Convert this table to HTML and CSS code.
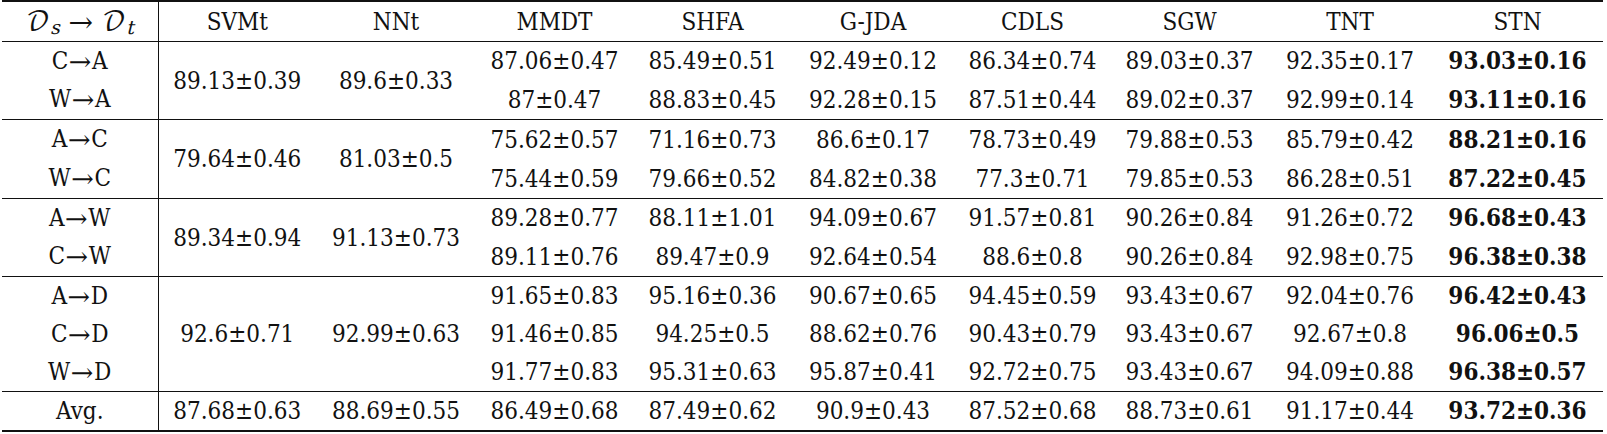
FILE: index.html
```html
<!DOCTYPE html>
<html lang="en">
<head>
    <meta charset="UTF-8">
    <meta name="viewport" content="width=device-width, initial-scale=1.0">
    <title>Domain Adaptation Results</title>
    <link rel="stylesheet" href="styles.css">
</head>
<body>
    <table class="results">
        <colgroup>
            <col class="c-task">
            <col class="c1"><col class="c2"><col class="c3"><col class="c4">
            <col class="c5"><col class="c6"><col class="c7"><col class="c8"><col class="c9">
        </colgroup>
        <thead>
            <tr class="head-row">
                <th class="task"><span class="math">𝒟<sub>s</sub> → 𝒟<sub>t</sub></span></th>
                <th>SVMt</th>
                <th>NNt</th>
                <th>MMDT</th>
                <th>SHFA</th>
                <th>G-JDA</th>
                <th>CDLS</th>
                <th>SGW</th>
                <th>TNT</th>
                <th>STN</th>
            </tr>
        </thead>
        <tbody class="group g2">
            <tr>
                <td class="task">C<span class="arr">→</span>A</td>
                <td rowspan="2">89.13±0.39</td>
                <td rowspan="2">89.6±0.33</td>
                <td>87.06±0.47</td>
                <td>85.49±0.51</td>
                <td>92.49±0.12</td>
                <td>86.34±0.74</td>
                <td>89.03±0.37</td>
                <td>92.35±0.17</td>
                <td class="best">93.03±0.16</td>
            </tr>
            <tr>
                <td class="task">W<span class="arr">→</span>A</td>
                <td>87±0.47</td>
                <td>88.83±0.45</td>
                <td>92.28±0.15</td>
                <td>87.51±0.44</td>
                <td>89.02±0.37</td>
                <td>92.99±0.14</td>
                <td class="best">93.11±0.16</td>
            </tr>
        </tbody>
        <tbody class="group g2 tall">
            <tr>
                <td class="task">A<span class="arr">→</span>C</td>
                <td rowspan="2">79.64±0.46</td>
                <td rowspan="2">81.03±0.5</td>
                <td>75.62±0.57</td>
                <td>71.16±0.73</td>
                <td>86.6±0.17</td>
                <td>78.73±0.49</td>
                <td>79.88±0.53</td>
                <td>85.79±0.42</td>
                <td class="best">88.21±0.16</td>
            </tr>
            <tr>
                <td class="task">W<span class="arr">→</span>C</td>
                <td>75.44±0.59</td>
                <td>79.66±0.52</td>
                <td>84.82±0.38</td>
                <td>77.3±0.71</td>
                <td>79.85±0.53</td>
                <td>86.28±0.51</td>
                <td class="best">87.22±0.45</td>
            </tr>
        </tbody>
        <tbody class="group g2">
            <tr>
                <td class="task">A<span class="arr">→</span>W</td>
                <td rowspan="2">89.34±0.94</td>
                <td rowspan="2">91.13±0.73</td>
                <td>89.28±0.77</td>
                <td>88.11±1.01</td>
                <td>94.09±0.67</td>
                <td>91.57±0.81</td>
                <td>90.26±0.84</td>
                <td>91.26±0.72</td>
                <td class="best">96.68±0.43</td>
            </tr>
            <tr>
                <td class="task">C<span class="arr">→</span>W</td>
                <td>89.11±0.76</td>
                <td>89.47±0.9</td>
                <td>92.64±0.54</td>
                <td>88.6±0.8</td>
                <td>90.26±0.84</td>
                <td>92.98±0.75</td>
                <td class="best">96.38±0.38</td>
            </tr>
        </tbody>
        <tbody class="group g3">
            <tr>
                <td class="task">A<span class="arr">→</span>D</td>
                <td rowspan="3">92.6±0.71</td>
                <td rowspan="3">92.99±0.63</td>
                <td>91.65±0.83</td>
                <td>95.16±0.36</td>
                <td>90.67±0.65</td>
                <td>94.45±0.59</td>
                <td>93.43±0.67</td>
                <td>92.04±0.76</td>
                <td class="best">96.42±0.43</td>
            </tr>
            <tr>
                <td class="task">C<span class="arr">→</span>D</td>
                <td>91.46±0.85</td>
                <td>94.25±0.5</td>
                <td>88.62±0.76</td>
                <td>90.43±0.79</td>
                <td>93.43±0.67</td>
                <td>92.67±0.8</td>
                <td class="best">96.06±0.5</td>
            </tr>
            <tr>
                <td class="task">W<span class="arr">→</span>D</td>
                <td>91.77±0.83</td>
                <td>95.31±0.63</td>
                <td>95.87±0.41</td>
                <td>92.72±0.75</td>
                <td>93.43±0.67</td>
                <td>94.09±0.88</td>
                <td class="best">96.38±0.57</td>
            </tr>
        </tbody>
        <tbody class="group avg">
            <tr>
                <td class="task">Avg.</td>
                <td>87.68±0.63</td>
                <td>88.69±0.55</td>
                <td>86.49±0.68</td>
                <td>87.49±0.62</td>
                <td>90.9±0.43</td>
                <td>87.52±0.68</td>
                <td>88.73±0.61</td>
                <td>91.17±0.44</td>
                <td class="best">93.72±0.36</td>
            </tr>
        </tbody>
    </table>
</body>
</html>
```

FILE: styles.css
```css
html, body {
    margin: 0;
    padding: 0;
    background-color: #fff;
}
body {
    padding: 0 4px 0 2px;
    color: #111;
}
.results {
    width: 1601px;
    border-collapse: collapse;
    table-layout: fixed;
    border-top: 2px solid #111;
    border-bottom: 2px solid #111;
    font-family: "DejaVu Serif Condensed", "DejaVu Serif", serif;
    font-stretch: condensed;
    font-size: 24px;
}
.c-task { width: 156px; }
.c1 { width: 158px; }
.c2 { width: 160px; }
.c3 { width: 157px; }
.c4 { width: 159px; }
.c5 { width: 162px; }
.c6 { width: 157px; }
.c7 { width: 157px; }
.c8 { width: 164px; }
.c9 { width: 171px; }

.results th,
.results td {
    padding: 0;
    text-align: center;
    vertical-align: middle;
    font-weight: normal;
    white-space: nowrap;
    line-height: 1;
}
.head-row th {
    height: 39px;
    border-bottom: 1px solid #111;
}
.results .task {
    border-right: 1px solid #111;
}
.group + .group tr:first-child td {
    border-top: 1px solid #111;
}
.g2 td {
    height: 38.5px;
}
.g2.tall td {
    height: 39px;
}
.g3 td {
    height: 38px;
}
.avg td {
    height: 38px;
}
td[rowspan] {
    height: auto;
}
.results .best {
    font-weight: bold;
}
.arr {
    font-family: "DejaVu Math TeX Gyre", "DejaVu Serif", serif;
    font-stretch: normal;
    font-size: 24px;
}
.math {
    font-family: "DejaVu Math TeX Gyre", "DejaVu Serif", serif;
    font-stretch: normal;
    font-size: 26px;
}
.math sub {
    font-style: italic;
    font-size: 19px;
    vertical-align: -4px;
    line-height: 0;
}
```
